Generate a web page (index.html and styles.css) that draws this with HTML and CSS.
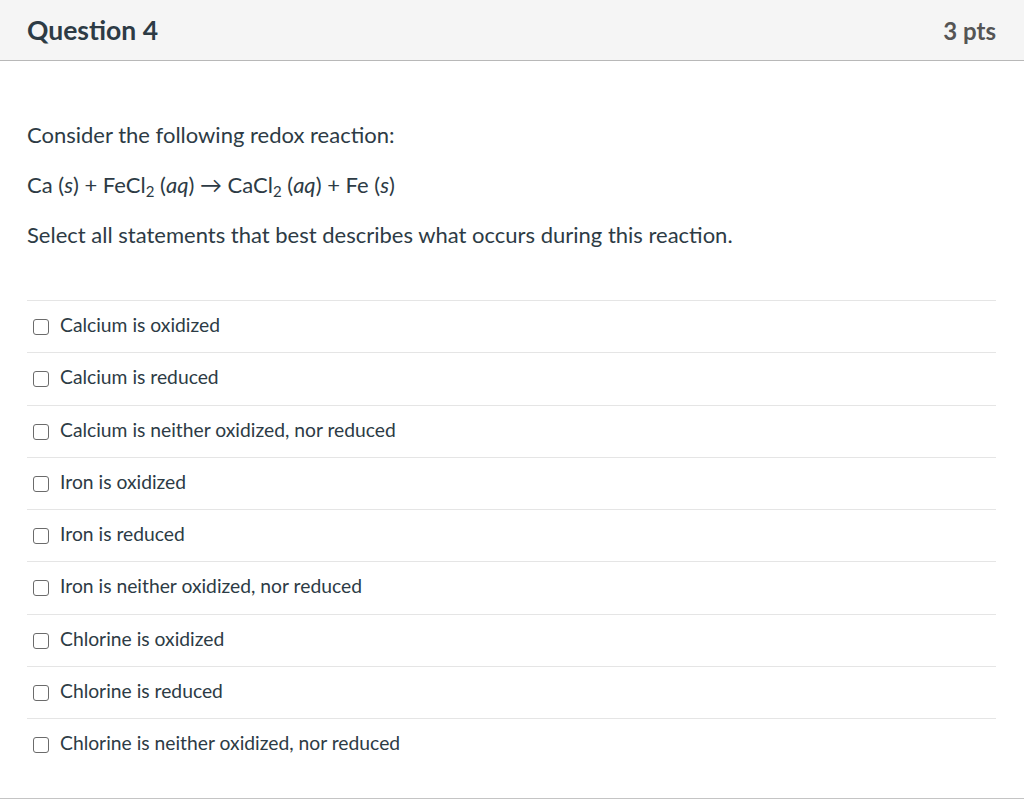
FILE: index.html
```html
<!DOCTYPE html>
<html>
<head>
<meta charset="utf-8">
<link rel="stylesheet" href="styles.css">
</head>
<body>
<div class="question">
  <div class="header">
    <h2 class="title">Question 4</h2>
    <span class="pts">3 pts</span>
  </div>
  <div class="content">
    <p class="text">Consider the following redox reaction:</p>
    <p class="text">Ca (<i>s</i>) + FeCl<sub>2</sub> (<i>aq</i>) → CaCl<sub>2</sub> (<i>aq</i>) + Fe (<i>s</i>)</p>
    <p class="text">Select all statements that best describes what occurs during this reaction.</p>
    <div class="answers">
      <label class="answer"><span class="box"></span><span class="label">Calcium is oxidized</span></label>
      <label class="answer"><span class="box"></span><span class="label">Calcium is reduced</span></label>
      <label class="answer"><span class="box"></span><span class="label">Calcium is neither oxidized, nor reduced</span></label>
      <label class="answer"><span class="box"></span><span class="label">Iron is oxidized</span></label>
      <label class="answer"><span class="box"></span><span class="label">Iron is reduced</span></label>
      <label class="answer"><span class="box"></span><span class="label">Iron is neither oxidized, nor reduced</span></label>
      <label class="answer"><span class="box"></span><span class="label">Chlorine is oxidized</span></label>
      <label class="answer"><span class="box"></span><span class="label">Chlorine is reduced</span></label>
      <label class="answer"><span class="box"></span><span class="label">Chlorine is neither oxidized, nor reduced</span></label>
    </div>
  </div>
</div>
</body>
</html>
```
FILE: styles.css
```css
html, body {
  margin: 0;
  padding: 0;
  background: #fff;
}
body {
  font-family: Lato, "Noto Sans", sans-serif;
  color: #2d3b45;
}
.question {
  border-bottom: 1px solid #c4c4c4;
  padding-bottom: 28px;
}
.header {
  height: 61px;
  box-sizing: border-box;
  display: flex;
  align-items: center;
  justify-content: space-between;
  padding: 0 28px 0 27px;
  background: #f5f5f5;
  border-bottom: 1px solid #b8b8b8;
}
.title {
  margin: 0;
  font-size: 26.5px;
  font-weight: 700;
  color: #2d3b45;
}
.pts {
  font-size: 24px;
  font-weight: 700;
  color: #555;
}
.content {
  padding: 0 28px 0 27px;
}
.text {
  margin: 0 0 20px 0;
  font-size: 22px;
  line-height: 30px;
}
.text:first-child {
  margin-top: 59px;
}
.text sub {
  font-size: 15px;
  line-height: 0;
  vertical-align: -4px;
}
.answers {
  margin-top: 50px;
}
.answer {
  display: flex;
  align-items: center;
  height: 52.25px;
  box-sizing: border-box;
  border-top: 1px solid #e5e5e5;
  padding-bottom: 3px;
  font-size: 19.3px;
}
.box {
  width: 14px;
  height: 14px;
  border: 1.5px solid #6b6b6b;
  border-radius: 3px;
  margin-left: 6px;
  margin-right: 11px;
  margin-top: 4px;
  flex: none;
}
.label {
  line-height: 24px;
}
```
